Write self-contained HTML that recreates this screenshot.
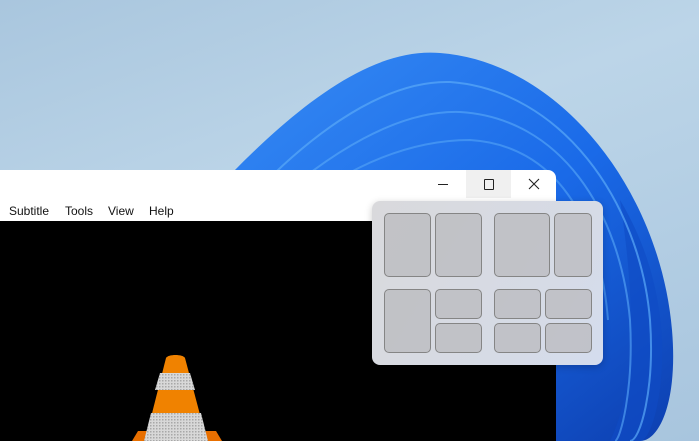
<!DOCTYPE html>
<html><head><meta charset="utf-8"><style>
body{margin:0;width:699px;height:441px;overflow:hidden;position:relative;background:linear-gradient(160deg,#a9c6de 0%,#bcd5e8 40%,#a8c5de 100%);font-family:"Liberation Sans",sans-serif}
.win{position:absolute;left:0;top:170px;width:556px;height:271px;background:#fff;border-top-right-radius:8px;overflow:hidden}
.menu{position:absolute;top:34px;font-size:12px;color:#111}
.video{position:absolute;left:0;top:51px;width:556px;height:220px;background:#000}
.panel{position:absolute;left:372px;top:201px;width:231px;height:164px;border-radius:8px;background:linear-gradient(120deg,#d9d9dc,#d6dbe6 70%,#d4dcee);box-shadow:0 2px 8px rgba(0,0,0,.2)}
.c{position:absolute;border:1px solid #858585;border-radius:5px;background:rgba(185,185,190,.75);box-sizing:border-box}
</style></head><body>
<svg width="699" height="441" style="position:absolute;left:0;top:0">
<defs><linearGradient id="g" x1="0" y1="0" x2="1" y2="1"><stop offset="0" stop-color="#3a8ff5"/><stop offset=".55" stop-color="#1a6ae8"/><stop offset="1" stop-color="#0d3fb0"/></linearGradient></defs>
<path d="M170,240 C250,150 350,45 440,53 C560,62 660,190 672,330 C678,400 660,441 640,441 L556,441 L556,200 Z" fill="url(#g)"/>
<path d="M620,200 C650,250 660,300 662,340 C664,400 650,441 640,441 L610,441 C630,400 640,330 620,200 Z" fill="#0f4bc4" opacity=".6"/>
<path d="M230,220 C300,140 380,80 450,82 C560,90 640,200 650,320 C655,390 640,441 630,441" fill="none" stroke="#5aaaf8" stroke-width="2" opacity=".7"/>
<path d="M260,215 C330,150 400,110 460,112 C560,118 620,210 630,320 C634,390 620,441 615,441" fill="none" stroke="#5aaaf8" stroke-width="2" opacity=".6"/>
<path d="M290,212 C350,165 410,140 470,140 C555,145 600,220 608,320" fill="none" stroke="#5aaaf8" stroke-width="2" opacity=".55"/>
<path d="M320,210 C370,180 420,170 470,172 C540,178 575,230 585,300" fill="none" stroke="#5aaaf8" stroke-width="2" opacity=".5"/>
<path d="M350,210 C400,195 440,195 480,205" fill="none" stroke="#5aaaf8" stroke-width="2" opacity=".5"/>
</svg>
<div class="win">
  <div style="position:absolute;left:466px;top:0;width:45px;height:28px;background:#f0f0f0"></div>
  <div style="position:absolute;left:438px;top:14px;width:10px;height:1px;background:#222"></div>
  <div style="position:absolute;left:484px;top:9px;width:8px;height:9px;border:1px solid #222;border-radius:1px"></div>
  <svg style="position:absolute;left:528px;top:8px" width="12" height="12"><path d="M1,1L11,11M11,1L1,11" stroke="#222" stroke-width="1.1"/></svg>
  <span class="menu" style="left:9px">Subtitle</span>
  <span class="menu" style="left:65px">Tools</span>
  <span class="menu" style="left:108px">View</span>
  <span class="menu" style="left:149px">Help</span>
  <div class="video">
    <svg width="300" height="220">
      <defs><pattern id="p" width="3" height="3" patternUnits="userSpaceOnUse"><rect width="3" height="3" fill="#d8d8d8"/><rect width="1.5" height="1.5" fill="#a8a8a8"/></pattern></defs>
      <path d="M132,220 L138,210 L172,210 L178,220 Z" fill="#e86f00"/>
      <path d="M204,210 L216,210 L222,220 L200,220 Z" fill="#e86f00"/>
      <path d="M145,220 L166,137 C168,133 183,133 185,137 L207,220 Z" fill="#f08200"/>
      <path d="M160,152 L190,152 L195,169 L155,169 Z" fill="url(#p)"/>
      <path d="M151,192 L201,192 L208,220 L144,220 Z" fill="url(#p)"/>
    </svg>
  </div>
</div>
<div class="panel">
  <div class="c" style="left:12px;top:12px;width:47px;height:64px"></div>
  <div class="c" style="left:63px;top:12px;width:47px;height:64px"></div>
  <div class="c" style="left:122px;top:12px;width:56px;height:64px"></div>
  <div class="c" style="left:182px;top:12px;width:38px;height:64px"></div>
  <div class="c" style="left:12px;top:88px;width:47px;height:64px"></div>
  <div class="c" style="left:63px;top:88px;width:47px;height:30px"></div>
  <div class="c" style="left:63px;top:122px;width:47px;height:30px"></div>
  <div class="c" style="left:122px;top:88px;width:47px;height:30px"></div>
  <div class="c" style="left:173px;top:88px;width:47px;height:30px"></div>
  <div class="c" style="left:122px;top:122px;width:47px;height:30px"></div>
  <div class="c" style="left:173px;top:122px;width:47px;height:30px"></div>
</div>
</body></html>
